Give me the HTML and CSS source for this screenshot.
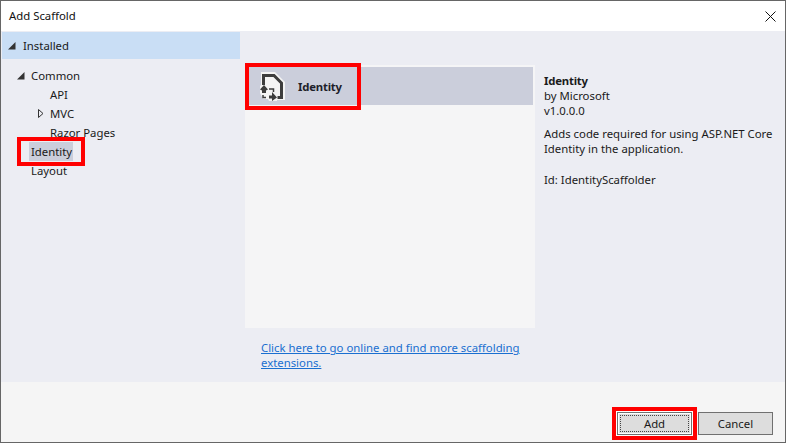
FILE: index.html
```html
<!DOCTYPE html>
<html lang="en">
<head>
<meta charset="utf-8">
<title>Add Scaffold</title>
<link rel="stylesheet" href="styles.css">
</head>
<body>
<div class="dialog">
  <header class="titlebar">
    <span class="title">Add Scaffold</span>
    <svg class="close" width="11" height="11" viewBox="0 0 11 11"><path d="M.5.5l10 10M10.500.5l-10 10" stroke="#111" stroke-width="1" fill="none"/></svg>
  </header>
  <main class="main">
    <nav class="sidebar">
      <div class="installed">
        <svg class="tri" width="8" height="8" viewBox="0 0 8 8"><path d="M7.500 0v7.500H0z" fill="#333"/></svg>
        <span>Installed</span>
      </div>
      <ul class="tree">
        <li class="node lvl1">
          <svg class="tri" width="8" height="8" viewBox="0 0 8 8"><path d="M7.500 0v7.500H0z" fill="#333"/></svg>
          <span>Common</span>
        </li>
        <li class="node lvl2"><span>API</span></li>
        <li class="node lvl2">
          <svg class="tri-open" width="6" height="9" viewBox="0 0 6 9"><path d="M.5.5v8l4.500-4z" fill="none" stroke="#333"/></svg>
          <span>MVC</span>
        </li>
        <li class="node lvl2"><span>Razor Pages</span></li>
        <li class="node lvl3 selected"><span class="sel-label">Identity</span><i class="mark mark-tree"></i></li>
        <li class="node lvl3"><span>Layout</span></li>
      </ul>
    </nav>
    <section class="center">
      <div class="list">
        <div class="item">
          <svg class="doc" width="26" height="29" viewBox="0 0 26 29">
            <path d="M1 0h14l10 10v18h-8v1h-8l-1-2H3l-3-6v-7l1-1z" fill="#f4f4f4"/>
            <path d="M3.500 13V3.500h10.500l7.500 7.500v14.500h-4" fill="none" stroke="#3d3d3d" stroke-width="3"/>
            <path d="M0 17.500l4-4.500 4 4.500-2 1V21H2v-2.500z" fill="#3d3d3d"/>
            <path d="M9 23.500h3V20l5 5.500-5 3.500v-2.500H9z" fill="#3d3d3d"/>
            <path d="M9 17h4.500v3M3 23v2.500h3" fill="none" stroke="#3d3d3d" stroke-width="1.500"/>
          </svg>
          <span class="item-name">Identity</span>
          <i class="mark mark-item"></i>
        </div>
      </div>
      <p class="online"><a href="#">Click here to go online and find more scaffolding extensions.</a></p>
    </section>
    <aside class="details">
      <div class="meta">
        <strong>Identity</strong>
        <span>by Microsoft</span>
        <span>v1.0.0.0</span>
      </div>
      <p class="desc">Adds code required for using ASP.NET Core Identity in the application.</p>
      <p class="id">Id: IdentityScaffolder</p>
    </aside>
  </main>
  <footer class="footer">
    <button class="btn default" type="button"><span class="focus">Add</span><i class="mark mark-add"></i></button>
    <button class="btn" type="button">Cancel</button>
  </footer>
</div>
</body>
</html>
```
FILE: styles.css
```css
* { box-sizing: border-box; }
html, body { margin: 0; padding: 0; }
body {
  width: 786px;
  height: 443px;
  overflow: hidden;
  font-family: "Noto Sans", "Open Sans", sans-serif;
  font-size: 11.35px;
  line-height: 15px;
  color: #1a1a1a;
}
.dialog {
  width: 786px;
  height: 443px;
  border: 1px solid #666;
  display: flex;
  flex-direction: column;
  background: #f5f5f5;
}
.titlebar {
  height: 30px;
  flex: none;
  background: #fff;
  display: flex;
  align-items: center;
  justify-content: space-between;
  padding: 0 9px 2px 8px;
}
.title { color: #111; }
.close { margin-top: 2px; }
.main {
  height: 351px;
  flex: none;
  display: flex;
  background: #ecedf3;
}
.sidebar { width: 239px; flex: none; padding: 1px 0 0 1px; }
.installed {
  height: 27px;
  background: #c9def5;
  display: flex;
  align-items: center;
  padding-left: 6px;
  gap: 7px;
}
.tree { list-style: none; margin: 7px 0 0; padding: 0; }
.node {
  height: 19px;
  display: flex;
  align-items: center;
  position: relative;
}
.lvl1 { padding-left: 15px; gap: 7px; margin-right: 1px; }
.lvl1 span { margin-left: -1px; }
.lvl2 { padding-left: 48px; }
.lvl3 { padding-left: 29px; }
.tri-open { margin-left: -12px; margin-right: 6px; }
.sel-label { background: #cbcedb; height: 19px; line-height: 19px; padding: 0 2px; margin-left: -2px; width: 44px; }
.mark { position: absolute; border: 4px solid #f00; display: block; pointer-events: none; }
.mark-tree { left: 15px; top: -5px; width: 68px; height: 29px; }
.center { width: 290px; flex: none; margin-left: 5px; padding-top: 34px; }
.list {
  height: 263px;
  background: #f5f5f6;
  padding: 2px;
}
.item {
  position: relative;
  height: 38px;
  background: #cbcedb;
  display: flex;
  align-items: center;
  padding-left: 13px;
}
.doc { flex: none; }
.item-name { font-weight: 700; margin-left: 12px; color: #1e1e2a; letter-spacing: -0.2px; }
.mark-item { left: -2px; top: -4px; width: 116px; height: 47px; }
.online { margin: 12px 0 0 16px; width: 268px; }
.online a { color: #1a6fd0; }
.details { flex: 1; padding: 42px 0 0 9px; }
.meta { display: flex; flex-direction: column; }
.meta strong { font-weight: 700; letter-spacing: -0.2px; }
.desc { margin: 8px 0 0; width: 235px; }
.id { margin: 16px 0 0; }
.footer {
  flex: 1;
  display: flex;
  justify-content: flex-end;
  align-items: flex-start;
  gap: 6px;
  padding: 30px 12px 0 0;
}
.btn {
  position: relative;
  width: 75px;
  height: 23px;
  padding: 0;
  background: #ddd;
  border: 1px solid #707070;
  border-radius: 0;
  font: inherit;
  color: #1a1a1a;
  display: flex;
  align-items: center;
  justify-content: center;
}
.default { box-shadow: inset 0 0 0 1px #fff, 0 0 0 1px #fff; }
.focus {
  position: absolute;
  inset: 2px;
  border: 1px dotted #444;
  display: flex;
  align-items: center;
  justify-content: center;
}
.mark-add { left: -6px; top: -6px; width: 85px; height: 33px; }
```
